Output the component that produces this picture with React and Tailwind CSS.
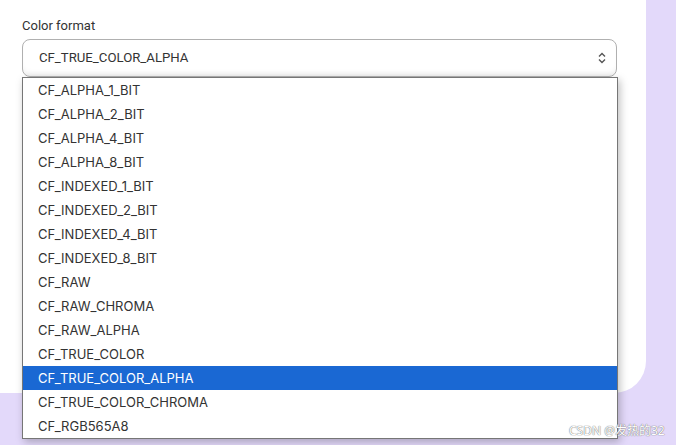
const options = [
  'CF_ALPHA_1_BIT',
  'CF_ALPHA_2_BIT',
  'CF_ALPHA_4_BIT',
  'CF_ALPHA_8_BIT',
  'CF_INDEXED_1_BIT',
  'CF_INDEXED_2_BIT',
  'CF_INDEXED_4_BIT',
  'CF_INDEXED_8_BIT',
  'CF_RAW',
  'CF_RAW_CHROMA',
  'CF_RAW_ALPHA',
  'CF_TRUE_COLOR',
  'CF_TRUE_COLOR_ALPHA',
  'CF_TRUE_COLOR_CHROMA',
  'CF_RGB565A8',
];

const selected = 'CF_TRUE_COLOR_ALPHA';

export default function App() {
  return (
    <div className="relative w-[676px] h-[445px] overflow-hidden bg-[#e3d9fa]">
      {/* card */}
      <div className="w-[646px] h-[393px] bg-white rounded-br-[32px] pt-[18px] pl-[22px]">
        <label className="block text-[13px] leading-[16px] text-[#333] font-['Roboto',sans-serif]">
          Color format
        </label>
        <div className="mt-[5px] w-[595px] h-[38px] rounded-[8px] border border-[#b0b0b0] bg-white shadow-[inset_0_-6px_6px_-4px_rgba(0,0,0,0.08)] flex items-center justify-between pl-[16px] pr-[9px]">
          <span className="text-[13.2px] text-[#333] font-['Roboto',sans-serif]">{selected}</span>
          <svg width="10" height="14" viewBox="0 0 10 14" fill="none" stroke="#555" strokeWidth="1.4">
            <path d="M2 5.5 L5 2.5 L8 5.5" />
            <path d="M2 8.5 L5 11.5 L8 8.5" />
          </svg>
        </div>
      </div>

      {/* open list */}
      <ul className="absolute left-[22px] top-[77px] w-[596px] border border-[#767676] bg-white shadow-[2px_3px_8px_rgba(0,0,0,0.25)] font-['Inter',sans-serif]">
        {options.map((o) => (
          <li
            key={o}
            className={`h-[24px] flex items-center pl-[15px] pt-[2px] text-[13px] ${
              o === selected ? 'bg-[#1a68d3] text-white' : 'text-[#333]'
            }`}
          >
            {o}
          </li>
        ))}
      </ul>

      <div className="absolute left-[569px] top-[422px] text-[12px] text-white font-['Noto_Sans','Noto_Sans_CJK_SC',sans-serif] [text-shadow:0_0_1px_#777,0_0_1px_#777]">
        CSDN @发热的32
      </div>
    </div>
  );
}
